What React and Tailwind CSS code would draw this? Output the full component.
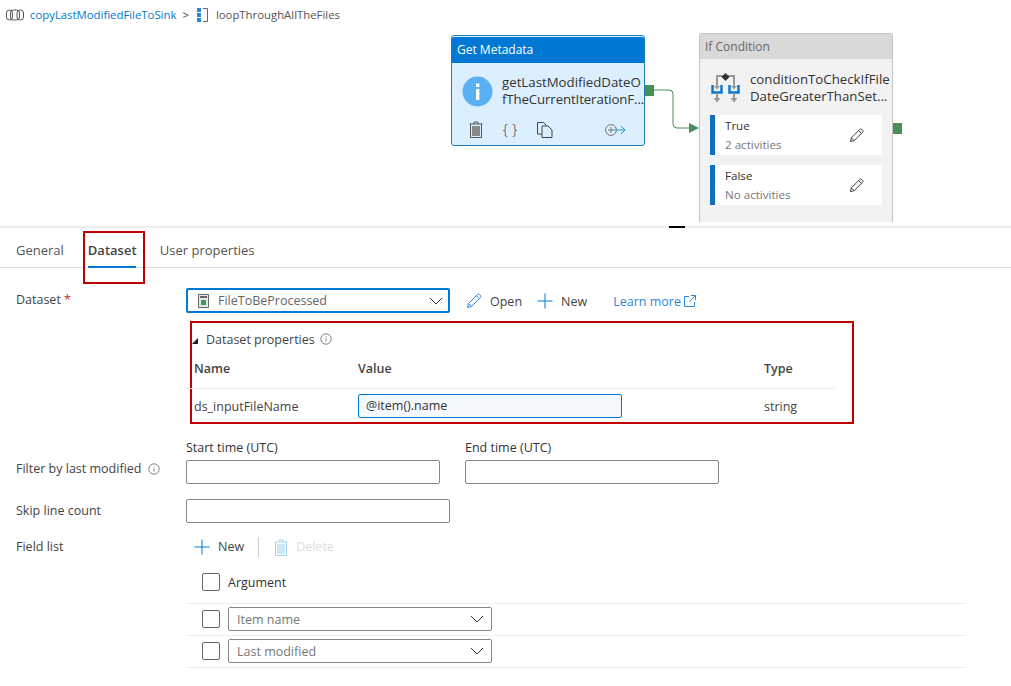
const Chevron = () => (
  <svg width="14" height="8" viewBox="0 0 14 8" fill="none" stroke="#333" strokeWidth="1">
    <path d="M1 1l6 6 6-6" />
  </svg>
)

const Info = () => (
  <svg width="12" height="12" viewBox="0 0 12 12" fill="none" stroke="#666" strokeWidth="0.8">
    <circle cx="6" cy="6" r="5.2" />
    <path d="M6 5.2v3.4M6 3.2v1" />
  </svg>
)

const Plus = () => (
  <svg width="16" height="16" viewBox="0 0 16 16" stroke="#0078d4" strokeWidth="1" fill="none">
    <path d="M8 .5v15M.5 8h15" />
  </svg>
)

const Pencil = ({ color = '#333', size = 16 }) => (
  <svg width={size} height={size} viewBox="0 0 16 16" fill="none" stroke={color} strokeWidth="1">
    <path d="M1.5 14.5l1-4L11.5 1.5a1.4 1.4 0 0 1 2 0l1 1a1.4 1.4 0 0 1 0 2l-9 9z" />
    <path d="M2.5 10.5l3 3M10.3 2.7l3 3" />
  </svg>
)

const Trash = ({ color = '#555', fill = '#888' }) => (
  <svg width="14" height="17" viewBox="0 0 14 17" fill="none" stroke={color} strokeWidth="1">
    <path d="M.5 3h13M5 3V1h4v2" />
    <path d="M1.5 3v13.5h11V3" />
    <rect x="3" y="5" width="8" height="10" fill={fill} stroke="none" />
  </svg>
)

const Check = () => <span className="block w-[18px] h-[18px] border border-[#666] rounded-[2px] bg-white" />

const TextBox = ({ className }) => <div className={`h-[24px] border border-[#888] rounded-[2px] bg-white ${className}`} />

const FieldSelect = ({ label }) => (
  <div className="w-[264px] h-[24px] border border-[#888] rounded-[2px] flex items-center justify-between pl-[8px] pr-[7px] text-[#777]">
    <span className="pt-[2px]">{label}</span>
    <Chevron />
  </div>
)

const FormLabel = ({ children }) => <div className="w-[170px] shrink-0 text-[#444]">{children}</div>

const GetMetadataNode = () => (
  <div className="absolute left-[451px] top-[35px] w-[194px] h-[111px] border border-[#1b7fb5] rounded-[3px] bg-[#dcefff] flex flex-col">
    <div className="h-[26px] bg-[#0078d4] text-white text-[12px] leading-[26px] pl-[5px] mt-[1px] rounded-t-[2px]">Get Metadata</div>
    <div className="flex items-center mt-[11px] pl-[10px]">
      <svg width="31" height="31" viewBox="0 0 31 31" className="shrink-0">
        <circle cx="15.5" cy="15.5" r="15" fill="#59b0f2" />
        <rect x="14" y="13" width="3.4" height="11" fill="#fff" />
        <rect x="14" y="7.5" width="3.4" height="3.4" fill="#fff" />
      </svg>
      <div className="ml-[9px] text-[13.25px] leading-[17px] text-[#333] whitespace-nowrap">
        <div>getLastModifiedDateO</div>
        <div className="tracking-[-0.12px]">fTheCurrentIterationF...</div>
      </div>
    </div>
    <div className="flex items-center mt-[13px] pl-[17px]">
      <Trash />
      <span className="ml-[18px] w-[18px] text-[15px] leading-[17px] font-light text-[#444] text-center">{'{ }'}</span>
      <svg width="16" height="17" viewBox="0 0 16 17" fill="none" stroke="#444" className="ml-[18px]">
        <path d="M.5 13V1.5h6l3 3v9z" fill="#dcefff" />
        <path d="M5 16.5V5h6l4 4v7.5z" fill="#dcefff" />
      </svg>
      <svg width="21" height="12" viewBox="0 0 21 12" fill="none" className="ml-[52px]">
        <circle cx="6" cy="6" r="5.4" stroke="#777" />
        <path d="M3 6h6M6 3v6" stroke="#777" />
        <path d="M9 6h11M16 2l4 4-4 4" stroke="#1b9ad6" />
      </svg>
    </div>
  </div>
)

const BranchRow = ({ title, sub }) => (
  <div className="h-[40px] w-[172px] bg-white border-l-[5px] border-[#106ebe] flex items-center justify-between pr-[18px] pl-[10px]">
    <div className="text-[11.6px] leading-[19px]">
      <div className="text-[#333]">{title}</div>
      <div className="text-[#777]">{sub}</div>
    </div>
    <Pencil size={15} />
  </div>
)

const IfConditionNode = () => (
  <div className="absolute left-[699px] top-[33px] w-[194px] h-[189px] border border-b-0 border-[#c4c4c4] rounded-t-[3px] bg-[#f2f2f2] flex flex-col">
    <div className="h-[25px] bg-[#d9d9d9] text-[#666] text-[12px] leading-[25px] pl-[5px]">If Condition</div>
    <div className="flex items-center mt-[12px] pl-[11px]">
      <svg width="29" height="32" viewBox="0 0 29 32" className="shrink-0" fill="none">
        <path d="M6 15V4h17v11" stroke="#999" strokeWidth="2" />
        <path d="M14.5 1l4 4-4 4-4-4z" fill="#333" />
        <path d="M3 14h6l-3 3.5zM20 14h6l-3 3.5z" fill="#999" />
        <path d="M1.5 13v7.5h9V13M18.5 13v7.5h9V13" stroke="#0078d4" strokeWidth="2.4" />
        <path d="M6 21v6M23 21v6" stroke="#999" strokeWidth="2" />
        <path d="M2.5 26h7l-3.5 4.5zM19.5 26h7l-3.5 4.5z" fill="#999" />
      </svg>
      <div className="ml-[10px] text-[13.25px] leading-[17px] text-[#333] whitespace-nowrap">
        <div>conditionToCheckIfFile</div>
        <div>DateGreaterThanSet...</div>
      </div>
    </div>
    <div className="flex flex-col gap-[10px] mt-[10px] ml-[10px]">
      <BranchRow title="True" sub="2 activities" />
      <BranchRow title="False" sub="No activities" />
    </div>
  </div>
)

const Canvas = () => (
  <div className="relative h-[226px] border-b-[2px] border-[#eee] box-content">
    <div className="flex items-center h-[30px] text-[11.35px]">
      <svg width="18" height="12" viewBox="0 0 18 12" fill="none" stroke="#555" className="ml-[6px]">
        <rect x=".5" y="1" width="6" height="10" rx="3" />
        <rect x="4.5" y="1" width="9" height="10" rx="3" />
        <rect x="11" y="1" width="6.5" height="10" rx="3" />
      </svg>
      <span className="ml-[6px] text-[#0078d4]">copyLastModifiedFileToSink</span>
      <span className="ml-[6px] text-[#444]">&gt;</span>
      <svg width="11" height="14" viewBox="0 0 11 14" className="ml-[8px]">
        <rect x="0" y="0" width="4" height="4" fill="#2b88d8" />
        <rect x="0" y="5" width="4" height="4" fill="#2b88d8" />
        <rect x="0" y="10" width="4" height="4" fill="#2b88d8" />
        <path d="M6 .5h4.5v13H6" fill="none" stroke="#666" />
      </svg>
      <span className="ml-[8px] text-[#555]">loopThroughAllTheFiles</span>
    </div>
    <GetMetadataNode />
    <IfConditionNode />
    <svg width="60" height="50" viewBox="0 0 60 50" fill="none" className="absolute left-[645px] top-[84px]">
      <rect x="0" y="1" width="9" height="11" fill="#4a8f55" />
      <path d="M9 6h15a4 4 0 0 1 4 4v30a4 4 0 0 0 4 4h12" stroke="#4a8f55" />
      <path d="M44 39l10 5-10 5z" fill="#4a8f55" />
    </svg>
    <div className="absolute left-[893px] top-[123px] w-[9px] h-[11px] bg-[#4a8f55]" />
    <div className="absolute left-[669px] top-[226px] w-[16px] h-[2px] bg-black" />
  </div>
)

const Tabs = () => (
  <div className="relative h-[40px] border-b border-[#ddd] flex pl-[16px] text-[13px] text-[#555]">
    <span className="leading-[44px]">General</span>
    <span className="ml-[24px] leading-[44px] font-semibold text-[#444] border-b-[2px] border-[#0078d4] h-[40px] w-[48px] whitespace-nowrap">Dataset</span>
    <span className="ml-[24px] leading-[44px]">User properties</span>
    <div className="absolute left-[83px] top-[3px] w-[62px] h-[53px] border-[2px] border-[#c00000]" />
  </div>
)

const DatasetSection = () => (
  <div className="flex pl-[16px] pt-[20px]">
    <FormLabel>
      <span className="leading-[24px]">Dataset <span className="text-[#c33]">*</span></span>
    </FormLabel>
    <div className="flex flex-col">
      <div className="flex items-center">
        <div className="w-[264px] h-[25px] border-[2px] border-[#0078d4] rounded-[2px] flex items-center pl-[10px] pr-[5px] text-[#666]">
          <svg width="11" height="14" viewBox="0 0 11 14" className="shrink-0">
            <path d="M.5.5h10v13H.5z" fill="#e8e8e8" stroke="#666" />
            <path d="M2 2h7v2H2z" fill="#666" />
            <rect x="3" y="6" width="5" height="5" fill="#3c9a4e" />
          </svg>
          <span className="ml-[9px] flex-1 pt-[1px]">FileToBeProcessed</span>
          <Chevron />
        </div>
        <div className="ml-[16px]"><Pencil color="#2b88d8" /></div>
        <span className="ml-[8px] text-[#444] pt-[3px]">Open</span>
        <div className="ml-[15px]"><Plus /></div>
        <span className="ml-[8px] text-[#444] pt-[3px]">New</span>
        <span className="ml-[26px] text-[#2b88d8] pt-[3px]">Learn more</span>
        <svg width="12" height="12" viewBox="0 0 12 12" fill="none" stroke="#2b88d8" className="ml-[3px]">
          <path d="M5 1.5H.5v10h10V7M7 .5h4.5V5M11.5.5L5.5 6.5" />
        </svg>
      </div>
      <div className="w-[664px] h-[103px] ml-[4px] mt-[8px] border-[2px] border-[#c00000] pl-[2px]">
        <div className="flex items-center h-[33px] pt-[1px] -ml-[2px]">
          <svg width="6" height="6" viewBox="0 0 6 6" className="mt-[1px]"><path d="M0 6L6 0v6z" fill="#222" /></svg>
          <span className="ml-[8px] text-[#444]">Dataset properties</span>
          <span className="ml-[5px] -mt-[3px]"><Info /></span>
        </div>
        <div className="flex h-[33px] items-center font-semibold text-[#444] text-[12.5px] border-b border-[#eee] -ml-[8px] w-[650px] pl-[8px] pb-[6px]">
          <span className="w-[164px]">Name</span>
          <span className="w-[406px]">Value</span>
          <span>Type</span>
        </div>
        <div className="flex items-center h-[34px] text-[#444]">
          <span className="w-[164px] pt-[2px]">ds_inputFileName</span>
          <div className="w-[264px] h-[24px] border border-[#0078d4] rounded-[2px] bg-[#f4f9fd] pl-[7px] leading-[22px] text-[#333]">@item().name</div>
          <span className="ml-[142px] pt-[2px]">string</span>
        </div>
      </div>
    </div>
  </div>
)

const FilterSection = () => (
  <div className="flex pl-[16px] mt-[14px]">
    <FormLabel>
      <span className="flex items-center mt-[22px] gap-[7px] whitespace-nowrap">Filter by last modified <Info /></span>
    </FormLabel>
    <div className="flex gap-[25px]">
      <div className="flex flex-col gap-[3px]">
        <span className="text-[#333] font-medium leading-[19px]">Start time (UTC)</span>
        <TextBox className="w-[254px]" />
      </div>
      <div className="flex flex-col gap-[3px]">
        <span className="text-[#333] font-medium leading-[19px]">End time (UTC)</span>
        <TextBox className="w-[254px]" />
      </div>
    </div>
  </div>
)

const FieldList = () => (
  <div className="flex pl-[16px] mt-[11px]">
    <FormLabel><span className="leading-[24px] block mt-[1px]">Field list</span></FormLabel>
    <div className="flex flex-col w-[780px]">
      <div className="flex items-center h-[24px] pl-[8px] mt-[1px]">
        <Plus />
        <span className="ml-[8px] text-[#444] pt-[1px]">New</span>
        <div className="w-px h-[20px] bg-[#ccc] ml-[14px]" />
        <div className="ml-[15px]"><Trash color="#a6d4f5" fill="#cfe6f8" /></div>
        <span className="ml-[8px] text-[#ddd] pt-[1px]">Delete</span>
      </div>
      <div className="flex items-center h-[45px] pl-[16px] border-b border-[#eee] pt-[1px]">
        <Check />
        <span className="ml-[8px] font-medium text-[#333] pt-[3px]">Argument</span>
      </div>
      <div className="flex items-center h-[32px] pl-[16px] pb-[1px] border-b border-[#eee]">
        <Check />
        <div className="ml-[8px]"><FieldSelect label="Item name" /></div>
      </div>
      <div className="flex items-center h-[32px] pl-[16px] pb-[1px] border-b border-[#eee]">
        <Check />
        <div className="ml-[8px]"><FieldSelect label="Last modified" /></div>
      </div>
    </div>
  </div>
)

export default function App() {
  return (
    <div className="w-[1011px] h-[686px] overflow-hidden bg-white font-['Open_Sans',sans-serif] text-[12.5px]">
      <Canvas />
      <Tabs />
      <DatasetSection />
      <FilterSection />
      <div className="flex pl-[16px] mt-[15px] items-center">
        <FormLabel>Skip line count</FormLabel>
        <TextBox className="w-[264px]" />
      </div>
      <FieldList />
    </div>
  )
}
